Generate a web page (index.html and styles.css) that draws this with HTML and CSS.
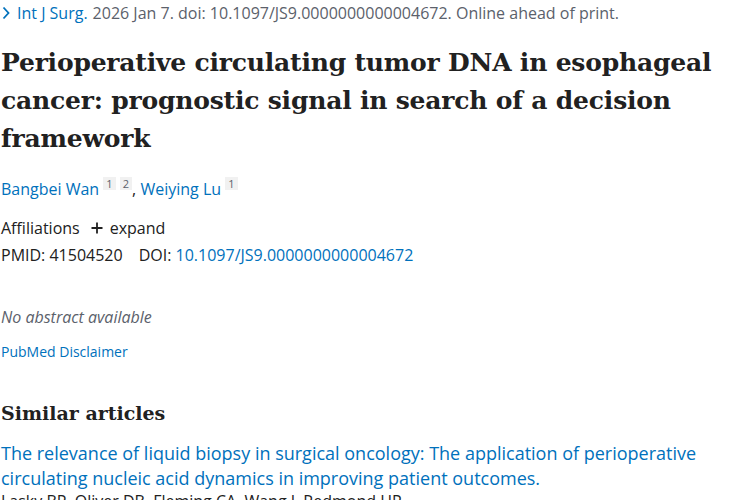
FILE: index.html
```html
<!DOCTYPE html>
<html>
<head>
<meta charset="utf-8">
<link rel="stylesheet" href="styles.css">
</head>
<body>
<main class="article">
  <div class="citation">
    <a class="journal"><svg class="chev" width="10" height="14" viewBox="0 0 10 14"><path d="M2.5 1.5 L7.5 7 L2.5 12.5" fill="none" stroke="#0071bc" stroke-width="1.8"/></svg>Int J Surg.</a>
    <span class="cit">2026 Jan 7. doi: 10.1097/JS9.0000000000004672. Online ahead of print.</span>
  </div>
  <h1 class="title">Perioperative circulating tumor DNA in esophageal cancer: prognostic signal in search of a decision framework</h1>
  <div class="authors">
    <a class="author">Bangbei Wan</a> <sup class="aff">1</sup> <sup class="aff">2</sup>, <a class="author">Weiying Lu</a> <sup class="aff">1</sup>
  </div>
  <div class="affiliations">
    <span>Affiliations</span>
    <span class="expand"><svg width="14" height="14" viewBox="0 0 14 14"><path d="M7 1.5 V12.5 M1.5 7 H12.5" stroke="#212121" stroke-width="1.8"/></svg>expand</span>
  </div>
  <div class="ids">
    <span>PMID: 41504520</span>
    <span>DOI: <a class="link">10.1097/JS9.0000000000004672</a></span>
  </div>
  <p class="noabs">No abstract available</p>
  <a class="disclaimer">PubMed Disclaimer</a>
  <h2 class="similar">Similar articles</h2>
  <a class="sim-title">The relevance of liquid biopsy in surgical oncology: The application of perioperative circulating nucleic acid dynamics in improving patient outcomes.</a>
  <div class="sim-authors">Lasky BP, Oliver DB, Fleming CA, Wang J, Redmond HP.</div>
</main>
</body>
</html>
```
FILE: styles.css
```css
html, body { margin: 0; padding: 0; background: #fff; }
body { font-family: "Open Sans", "Noto Sans", sans-serif; color: #212121; font-size: 16px; }
.article { padding: 0 0 0 1px; }
a { color: #0071bc; text-decoration: none; }
.citation { height: 26px; display: flex; align-items: center; gap: 5px; font-size: 16px; color: #5b616b; }
.journal { display: inline-flex; align-items: center; gap: 6px; }
.chev { display: block; }
.title { font-family: "DejaVu Serif", "Liberation Serif", serif; font-size: 25px; font-weight: 700; line-height: 38px; margin: 18px 0 0 0; color: #212121; letter-spacing: -0.2px; }
.authors { margin-top: 19px; font-size: 16px; line-height: 24px; }
.aff { display: inline-block; background: #f1f1f1; color: #5b616b; font-size: 11px; line-height: 13px; padding: 0 3px; vertical-align: 7px; }
.affiliations { margin-top: 15px; display: flex; gap: 10px; align-items: center; line-height: 24px; }
.expand { display: inline-flex; align-items: center; gap: 6px; }
.ids { display: flex; gap: 16px; line-height: 24px; margin-top: 3px; }
.noabs { font-style: italic; color: #5b616b; margin: 38px 0 0 0; line-height: 24px; }
.disclaimer { display: block; font-size: 14px; margin-top: 13px; line-height: 20px; }
.similar { font-family: "DejaVu Serif", "Liberation Serif", serif; font-size: 19px; font-weight: 700; margin: 37px 0 0 0; line-height: 28px; }
.sim-title { display: block; font-size: 18px; line-height: 25px; margin-top: 14px; }
.sim-authors { font-size: 16px; line-height: 20px; color: #212121; }
```
